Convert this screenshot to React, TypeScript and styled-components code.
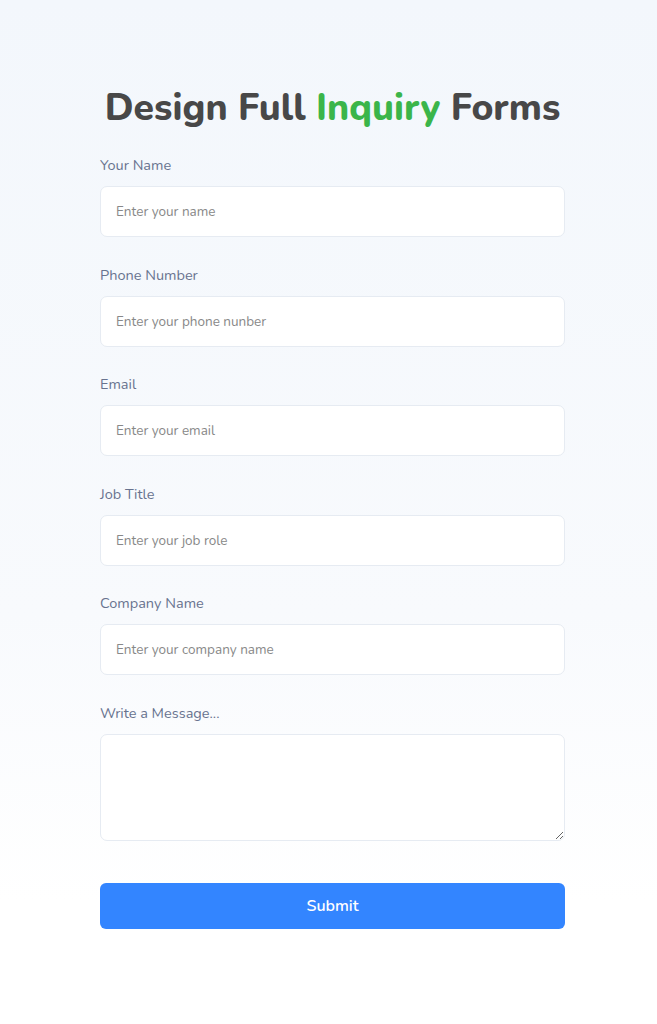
import styled, { createGlobalStyle } from "styled-components";

const GlobalStyle = createGlobalStyle`
  html, body {
    margin: 0;
    padding: 0;
  }
  body {
    font-family: "Nunito", "Lato", "Open Sans", sans-serif;
    background: #ffffff;
  }
  * {
    box-sizing: border-box;
  }
`;

const fields = [
  { label: "Your Name", placeholder: "Enter your name" },
  { label: "Phone Number", placeholder: "Enter your phone nunber" },
  { label: "Email", placeholder: "Enter your email" },
  { label: "Job Title", placeholder: "Enter your job role" },
  { label: "Company Name", placeholder: "Enter your company name" },
];

const App = () => {
  return (
    <Page>
      <GlobalStyle />
      <Form onSubmit={(e) => e.preventDefault()}>
        <Title>
          Design Full <span>Inquiry</span> Forms
        </Title>
        {fields.map((f) => (
          <Field key={f.label}>
            <Label>{f.label}</Label>
            <Input type="text" placeholder={f.placeholder} />
          </Field>
        ))}
        <Field>
          <Label>Write a Message...</Label>
          <TextArea />
        </Field>
        <SubmitButton type="submit">Submit</SubmitButton>
      </Form>
    </Page>
  );
};

const Page = styled.div`
  min-height: 1024px;
  background: linear-gradient(180deg, #f3f7fc 0%, #f8fafd 60%, #ffffff 88%);
  display: flex;
  justify-content: center;
  padding: 86px 0 0 8px;
`;

const Form = styled.form`
  width: 465px;
  display: flex;
  flex-direction: column;
`;

const Title = styled.h1`
  margin: 0 0 25px;
  text-align: center;
  font-size: 37.3px;
  font-weight: 800;
  color: #484848;
  line-height: 44px;

  span {
    color: #3bb54a;
  }
`;

const Field = styled.div`
  display: flex;
  flex-direction: column;
  margin-bottom: 27.5px;
`;

const Label = styled.label`
  font-size: 14.5px;
  color: #68738f;
  line-height: 20px;
  margin-bottom: 11px;
`;

const Input = styled.input`
  height: 51px;
  border: 1px solid #e6ebf2;
  border-radius: 7px;
  background: #ffffff;
  padding: 0 15px;
  font-family: inherit;
  font-size: 13.5px;
  color: #333333;
  outline: none;

  &::placeholder {
    color: #888888;
  }
`;

const TextArea = styled.textarea`
  height: 107px;
  border: 1px solid #e6ebf2;
  border-radius: 7px;
  background: #ffffff;
  padding: 12px 15px;
  font-family: inherit;
  font-size: 13.5px;
  outline: none;
  resize: vertical;
`;

const SubmitButton = styled.button`
  margin-top: 14.5px;
  height: 46px;
  border: none;
  border-radius: 6px;
  background: #3385ff;
  color: #ffffff;
  font-family: inherit;
  font-size: 16px;
  font-weight: 600;
  cursor: pointer;
`;

export default App;
